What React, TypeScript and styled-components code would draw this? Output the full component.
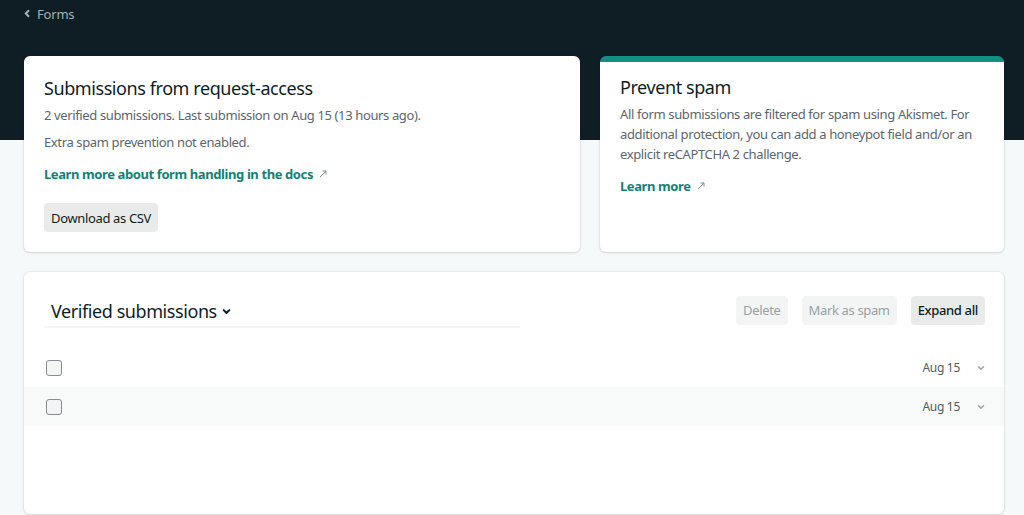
import React from "react";
import styled, { createGlobalStyle } from "styled-components";

const Global = createGlobalStyle`
  html, body { margin: 0; padding: 0; }
  body {
    font-family: "Noto Sans", "Open Sans", sans-serif;
    background: #f6f9fa;
    color: #0e1e25;
  }
  * { box-sizing: border-box; }
`;

const Page = styled.div`
  min-height: 515px;
  background: linear-gradient(#0f1e25 0, #0f1e25 140px, #f6f9fa 140px);
  padding: 1px 20px 0 24px;
`;

const Back = styled.a`
  display: inline-flex;
  align-items: center;
  gap: 6px;
  height: 18px;
  font-size: 13px;
  color: #a6b0b5;
  text-decoration: none;
  letter-spacing: -0.2px;
`;

const TopGrid = styled.div`
  display: grid;
  grid-template-columns: 556px 1fr;
  gap: 20px;
  margin-top: 33px;
`;

const Card = styled.section<{ $accent?: boolean }>`
  background: #fff;
  border-radius: 6px;
  box-shadow: 0 0 0 1px rgba(14, 30, 37, 0.04), 0 1px 3px rgba(14, 30, 37, 0.12);
  padding: ${(p) => (p.$accent ? "12px 20px 20px" : "19px 20px 20px")};
  border-top: ${(p) => (p.$accent ? "6px solid #128f82" : "none")};
  height: 196px;
`;

const Title = styled.h2`
  margin: 0 0 4px;
  font-size: 18px;
  font-weight: 400;
  line-height: 26px;
  color: #0e1e25;
  letter-spacing: -0.42px;
`;

const Text = styled.p<{ $gap?: number }>`
  margin: 0 0 ${(p) => p.$gap ?? 6}px;
  font-size: 13px;
  line-height: 20px;
  color: #5b666d;
  letter-spacing: -0.37px;
`;

const LinkLine = styled.a`
  display: inline-flex;
  align-items: center;
  gap: 6px;
  margin-top: 6px;
  font-size: 13px;
  line-height: 20px;
  font-weight: 700;
  color: #128175;
  text-decoration: none;
  letter-spacing: -0.4px;
`;

const Actions = styled.div`
  margin-top: 19px;
`;

const Button = styled.button<{ $disabled?: boolean; $strong?: boolean }>`
  font-family: inherit;
  font-size: 13px;
  line-height: 18px;
  height: 29px;
  padding: 0 7px;
  border: none;
  border-radius: 4px;
  cursor: pointer;
  letter-spacing: -0.35px;
  background: ${(p) => (p.$disabled ? "#f3f4f4" : "#e9ebeb")};
  color: ${(p) => (p.$disabled ? "#9aa1a6" : "#0e1e25")};
  font-weight: ${(p) => (p.$strong ? 500 : 400)};
`;

const ListCard = styled.section`
  margin-top: 20px;
  background: #fff;
  border-radius: 6px;
  box-shadow: 0 0 0 1px rgba(14, 30, 37, 0.04), 0 1px 3px rgba(14, 30, 37, 0.12);
  height: 242px;
  padding-top: 26px;
`;

const ListHeader = styled.div`
  display: flex;
  align-items: center;
  justify-content: space-between;
  padding: 0 19px 0 20px;
`;

const Heading = styled.div`
  display: flex;
  align-items: center;
  gap: 5px;
  padding: 0 0 2px 7px;
  width: 476px;
  border-bottom: 2px solid #f4f6f6;
  font-size: 18px;
  line-height: 26px;
  color: #0e1e25;
  letter-spacing: -0.42px;
`;

const ButtonRow = styled.div`
  display: flex;
  gap: 14px;
  margin-top: -6px;
`;

const Rows = styled.div`
  margin-top: 20px;
`;

const Row = styled.div<{ $alt?: boolean }>`
  display: flex;
  align-items: center;
  height: 39px;
  padding: 0 19px 0 22px;
  background: ${(p) => (p.$alt ? "#f8fafa" : "#fff")};
`;

const Check = styled.span`
  width: 16px;
  height: 16px;
  border: 1.5px solid #858d93;
  border-radius: 3px;
  background: #f3f4f4;
`;

const DateLabel = styled.span`
  margin-left: auto;
  font-size: 12px;
  color: #4f5b62;
  letter-spacing: -0.3px;
`;

const Chev = styled.span`
  display: inline-flex;
  margin-left: 17px;
`;

const ArrowIcon = () => (
  <svg width="8" height="8" viewBox="0 0 8 8" fill="none">
    <path d="M1 7L7 1M3.5 1H7V4.5" stroke="#7c8a8f" strokeWidth="1" />
  </svg>
);

const DownChevron = ({ size = 8, color = "#9aa1a6", w = 1.5 }: { size?: number; color?: string; w?: number }) => (
  <svg width={size} height={size} viewBox="0 0 8 8" fill="none">
    <path d="M1.5 2.8L4 5.3L6.5 2.8" stroke={color} strokeWidth={w} strokeLinecap="round" strokeLinejoin="round" />
  </svg>
);

export default function App() {
  return (
    <>
      <Global />
      <Page>
        <Back href="#">
          <svg width="7" height="9" viewBox="0 0 7 9" fill="none">
            <path d="M5 1.2L1.8 4.5L5 7.8" stroke="#a6b0b5" strokeWidth="2" />
          </svg>
          Forms
        </Back>
        <TopGrid>
          <Card>
            <Title>Submissions from request-access</Title>
            <Text $gap={7}>2 verified submissions. Last submission on Aug 15 (13 hours ago).</Text>
            <Text>Extra spam prevention not enabled.</Text>
            <LinkLine href="#">
              Learn more about form handling in the docs <ArrowIcon />
            </LinkLine>
            <Actions>
              <Button>Download as CSV</Button>
            </Actions>
          </Card>
          <Card $accent>
            <Title>Prevent spam</Title>
            <Text>
              All form submissions are filtered for spam using Akismet. For additional protection, you can add a
              honeypot field and/or an explicit reCAPTCHA 2 challenge.
            </Text>
            <LinkLine href="#">
              Learn more <ArrowIcon />
            </LinkLine>
          </Card>
        </TopGrid>
        <ListCard>
          <ListHeader>
            <Heading>
              Verified submissions
              <DownChevron size={9} color="#0e1e25" w={1.8} />
            </Heading>
            <ButtonRow>
              <Button $disabled>Delete</Button>
              <Button $disabled>Mark as spam</Button>
              <Button $strong>Expand all</Button>
            </ButtonRow>
          </ListHeader>
          <Rows>
            <Row>
              <Check />
              <DateLabel>Aug 15</DateLabel>
              <Chev>
                <DownChevron />
              </Chev>
            </Row>
            <Row $alt>
              <Check />
              <DateLabel>Aug 15</DateLabel>
              <Chev>
                <DownChevron />
              </Chev>
            </Row>
          </Rows>
        </ListCard>
      </Page>
    </>
  );
}
